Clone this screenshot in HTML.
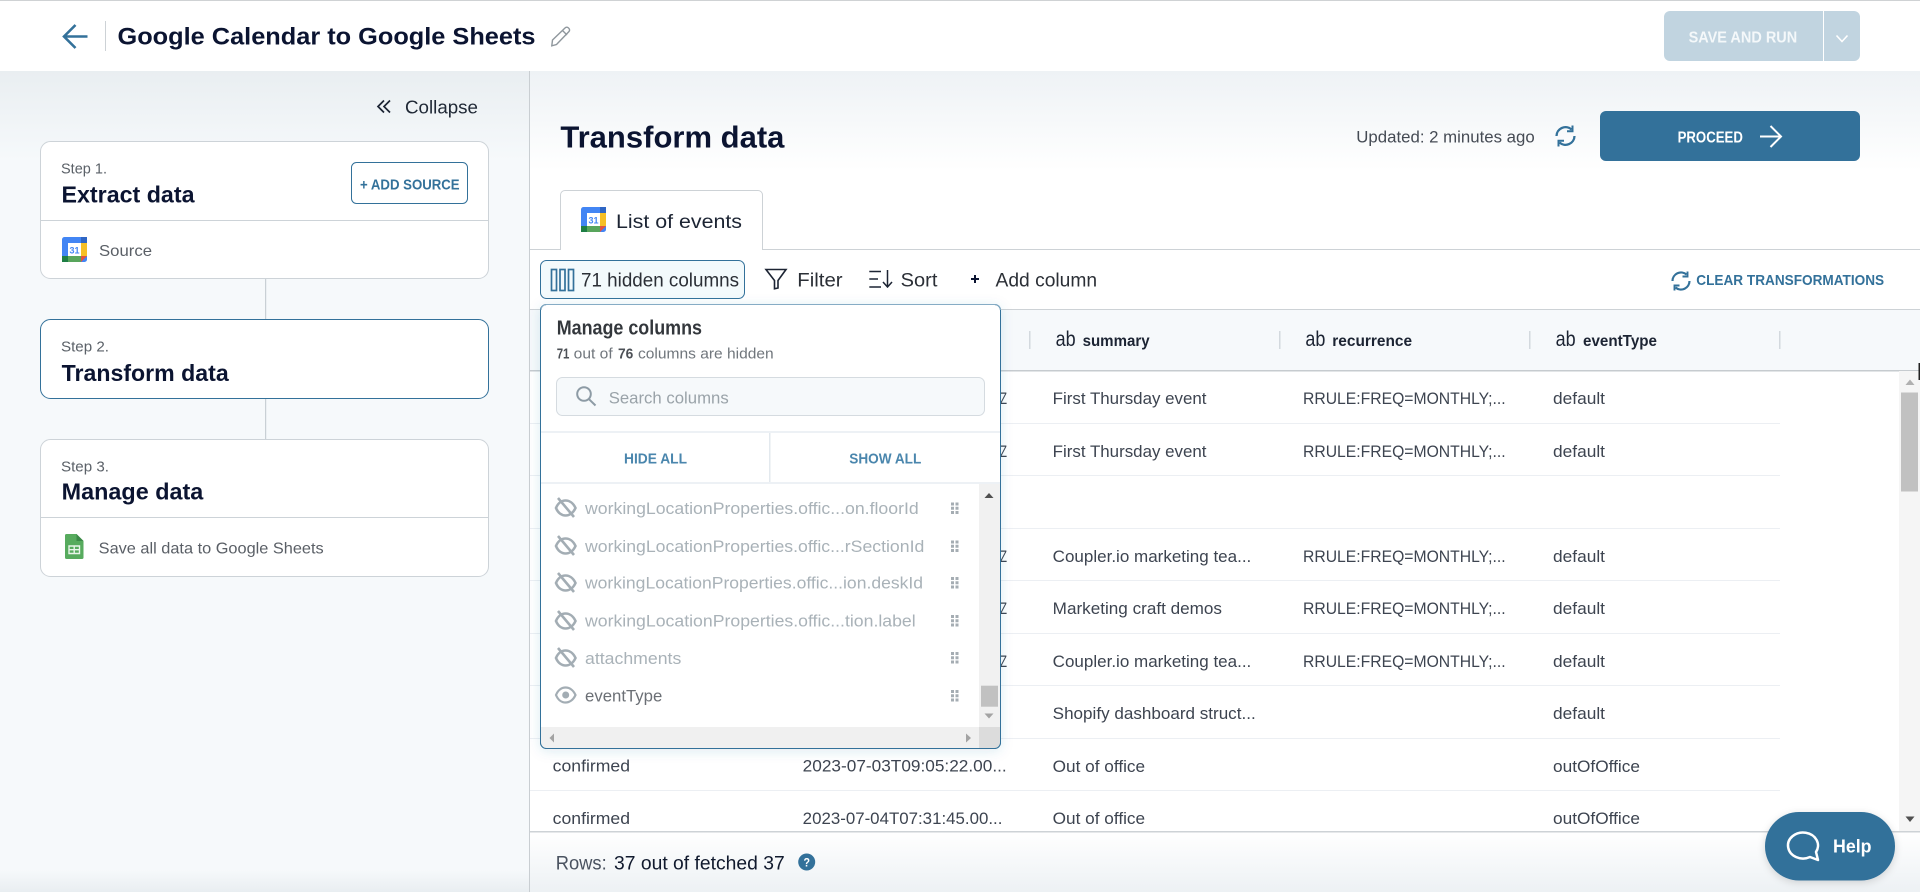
<!DOCTYPE html>
<html lang="en">
<head>
<meta charset="utf-8">
<title>Google Calendar to Google Sheets</title>
<style>
html,body{margin:0;padding:0;background:#fff;width:1920px;height:892px;overflow:hidden}
svg{display:block;font-family:"Liberation Sans",sans-serif}
text{white-space:pre}
.b{font-weight:700}
</style>
</head>
<body>
<svg xmlns="http://www.w3.org/2000/svg" width="1920" height="892" viewBox="0 0 1920 892">
<defs>
<linearGradient id="gs" x1="0" y1="0" x2="0" y2="1"><stop offset="0" stop-color="#e9eef1"/><stop offset="1" stop-color="#f6f9fb"/></linearGradient>
<linearGradient id="gm" x1="0" y1="0" x2="0" y2="1"><stop offset="0" stop-color="#eef2f5"/><stop offset="1" stop-color="#ffffff"/></linearGradient>
<linearGradient id="gb" x1="0" y1="0" x2="0" y2="1"><stop offset="0" stop-color="#f6f9fb"/><stop offset="1" stop-color="#e9eef1"/></linearGradient>
<linearGradient id="gf" x1="0" y1="0" x2="0" y2="1"><stop offset="0" stop-color="#ffffff"/><stop offset="1" stop-color="#edf1f4"/></linearGradient>
<filter id="sh" x="-10%" y="-10%" width="120%" height="120%"><feDropShadow dx="0" dy="2" stdDeviation="6" flood-color="#33719a" flood-opacity=".14"/></filter>
<filter id="sh2" x="-20%" y="-30%" width="140%" height="160%"><feDropShadow dx="0" dy="2" stdDeviation="4" flood-color="#000" flood-opacity=".15"/></filter>
</defs>

<!-- header -->
<rect width="1920" height="71" fill="#fff"/>
<rect width="1920" height="1" fill="#cfd2d4"/>
<path d="M87.5 36.5H65M75.5 25L64 36.5L75.5 48" fill="none" stroke="#33719a" stroke-width="2.6"/>
<rect x="105" y="21" width="1" height="30" fill="#cdd2d6"/>
<text x="117.5" y="44.5" font-size="24.5" class="b" fill="#0b1431" textLength="418" lengthAdjust="spacingAndGlyphs">Google Calendar to Google Sheets</text>
<path d="M552.5 40L565 28C566 27 567.5 27 568.5 28C569.8 29.2 569.8 30.5 569 31.5L556.5 44.5L551.8 45.8ZM562.5 30.5L567 35" fill="none" stroke="#8f979d" stroke-width="1.4"/>
<rect x="1664" y="11" width="196" height="50" rx="6" fill="#c1d4e0"/>
<rect x="1823" y="11" width="1" height="50" fill="#fff"/>
<text x="1688.6" y="42.3" font-size="16" class="b" fill="#f4f8fa" textLength="108.6" lengthAdjust="spacingAndGlyphs">SAVE AND RUN</text>
<path d="M1836.5 35.5L1842 41.5L1847.5 35.5" fill="none" stroke="#fff" stroke-width="1.6"/>

<!-- sidebar -->
<rect x="0" y="71" width="529" height="821" fill="#f6f9fb"/>
<rect x="0" y="71" width="529" height="90" fill="url(#gs)"/>
<rect x="0" y="870" width="529" height="22" fill="url(#gb)"/>
<rect x="529" y="71" width="1" height="821" fill="#c9ced2"/>
<path d="M384 100.5L378 106.5L384 112.5M390 100.5L384 106.5L390 112.5" fill="none" stroke="#1c2433" stroke-width="1.7"/>
<text x="405" y="113.5" font-size="18" fill="#1f2835" textLength="73" lengthAdjust="spacingAndGlyphs">Collapse</text>

<rect x="265" y="279" width="1.2" height="40" fill="#c9d0d5"/>
<rect x="265" y="399" width="1.2" height="40" fill="#c9d0d5"/>

<!-- step 1 -->
<rect x="40.5" y="141.5" width="448" height="137" rx="10" fill="#fff" stroke="#cdd3d8"/>
<rect x="41" y="220" width="447" height="1" fill="#cdd3d8"/>
<text x="61" y="173.5" font-size="15" fill="#5b6168" textLength="46" lengthAdjust="spacingAndGlyphs">Step 1.</text>
<text x="61.5" y="202.7" font-size="23" class="b" fill="#0b1431" textLength="133" lengthAdjust="spacingAndGlyphs">Extract data</text>
<rect x="351.5" y="162.5" width="116" height="41" rx="5" fill="#fff" stroke="#33719a"/>
<text x="360" y="189.3" font-size="15" class="b" fill="#33719a" textLength="99.6" lengthAdjust="spacingAndGlyphs">+ ADD SOURCE</text>
<g>
<rect x="62" y="237" width="25" height="25" rx="2.5" fill="#4285f4"/>
<rect x="81" y="237" width="6" height="6" fill="#2f66c4"/>
<rect x="81" y="243" width="6" height="13" fill="#f6bf26"/>
<rect x="62" y="256" width="19" height="6" fill="#58a55c"/>
<rect x="62" y="256" width="6" height="6" fill="#1e7e45"/>
<path d="M81 256H87L81 262Z" fill="#e2523f"/>
<rect x="68" y="243" width="13" height="13" fill="#fff"/>
<text x="69.5" y="253.5" font-size="9.5" class="b" fill="#4285f4" textLength="10" lengthAdjust="spacingAndGlyphs">31</text>
</g>
<text x="99" y="256" font-size="16" fill="#5a5f66" textLength="53" lengthAdjust="spacingAndGlyphs">Source</text>

<!-- step 2 -->
<rect x="40.5" y="319.5" width="448" height="79" rx="10" fill="#fff" stroke="#33719a"/>
<text x="61" y="351.7" font-size="15" fill="#5b6168" textLength="48" lengthAdjust="spacingAndGlyphs">Step 2.</text>
<text x="61.7" y="381" font-size="23" class="b" fill="#0b1431" textLength="167" lengthAdjust="spacingAndGlyphs">Transform data</text>

<!-- step 3 -->
<rect x="40.5" y="439.5" width="448" height="137" rx="10" fill="#fff" stroke="#cdd3d8"/>
<rect x="41" y="517" width="447" height="1" fill="#cdd3d8"/>
<text x="61" y="471.7" font-size="15" fill="#5b6168" textLength="48" lengthAdjust="spacingAndGlyphs">Step 3.</text>
<text x="61.7" y="499.3" font-size="23" class="b" fill="#0b1431" textLength="141.6" lengthAdjust="spacingAndGlyphs">Manage data</text>
<path d="M66.5 534H76.5L83.5 541V557.5A1.5 1.5 0 0 1 82 559H66.5A1.5 1.5 0 0 1 65 557.5V535.5A1.5 1.5 0 0 1 66.5 534Z" fill="#57ab5e"/>
<path d="M76.5 534L83.5 541H76.5Z" fill="#3c8a48"/>
<path d="M69 546H79.5V553.5H69ZM69 549.7H79.5M74.2 546V553.5" fill="none" stroke="#e9f5ea" stroke-width="1.4"/>
<text x="98.7" y="553.3" font-size="16" fill="#5a5f66" textLength="225" lengthAdjust="spacingAndGlyphs">Save all data to Google Sheets</text>

<!-- main -->
<rect x="530" y="71" width="1390" height="821" fill="#fff"/>
<rect x="530" y="71" width="1390" height="100" fill="url(#gm)"/>
<text x="560.4" y="147.3" font-size="31" class="b" fill="#0b1431" textLength="224" lengthAdjust="spacingAndGlyphs">Transform data</text>
<text x="1356.3" y="142.7" font-size="16.5" fill="#454b54" textLength="178.4" lengthAdjust="spacingAndGlyphs">Updated: 2 minutes ago</text>
<g fill="none" stroke="#33719a" stroke-width="2.3">
<path d="M1556.5 136A9 9 0 0 1 1571.5 129.5"/>
<path d="M1572.5 125.5V131.2H1567" stroke-width="2"/>
<path d="M1574.5 136A9 9 0 0 1 1559.5 142.5"/>
<path d="M1558.5 146.5V140.8H1564" stroke-width="2"/>
</g>
<rect x="1600" y="111" width="260" height="50" rx="6" fill="#33719a"/>
<text x="1677.6" y="142.3" font-size="15.5" class="b" fill="#fff" textLength="65.3" lengthAdjust="spacingAndGlyphs">PROCEED</text>
<path d="M1760 136.5H1780M1770.5 126L1781 136.5L1770.5 147" fill="none" stroke="#fff" stroke-width="2"/>

<!-- tabs -->
<rect x="530" y="249" width="1390" height="1" fill="#cdd2d6"/>
<path d="M560.5 249.5V195A4.5 4.5 0 0 1 565 190.5H758A4.5 4.5 0 0 1 762.5 195V249.5" fill="#fff" stroke="#cdd2d6"/>
<rect x="561" y="248" width="201" height="3" fill="#fff"/>
<g>
<rect x="581" y="207" width="25" height="25" rx="2.5" fill="#4285f4"/>
<rect x="600" y="207" width="6" height="6" fill="#2f66c4"/>
<rect x="600" y="213" width="6" height="13" fill="#f6bf26"/>
<rect x="581" y="226" width="19" height="6" fill="#58a55c"/>
<rect x="581" y="226" width="6" height="6" fill="#1e7e45"/>
<path d="M600 226H606L600 232Z" fill="#e2523f"/>
<rect x="587" y="213" width="13" height="13" fill="#fff"/>
<text x="588.5" y="223.5" font-size="9.5" class="b" fill="#4285f4" textLength="10" lengthAdjust="spacingAndGlyphs">31</text>
</g>
<text x="616" y="228" font-size="19" fill="#1c2433" textLength="126" lengthAdjust="spacingAndGlyphs">List of events</text>

<!-- toolbar -->
<rect x="540.5" y="260.5" width="204" height="38" rx="6" fill="#f3fafc" stroke="#33719a"/>
<g fill="none" stroke="#33719a" stroke-width="1.7">
<rect x="551.5" y="269.5" width="5" height="21"/>
<rect x="560" y="269.5" width="5" height="21"/>
<rect x="568.5" y="269.5" width="5" height="21"/>
</g>
<text x="581" y="286.7" font-size="19" fill="#2b2f36" textLength="158" lengthAdjust="spacingAndGlyphs">71 hidden columns</text>
<path d="M766 269.5H786L778 280.5V288L774.5 288.8V280.5Z" fill="none" stroke="#1c2433" stroke-width="1.6"/>
<text x="797.3" y="286.7" font-size="19" fill="#2b2f36" textLength="45.3" lengthAdjust="spacingAndGlyphs">Filter</text>
<path d="M869.3 271.5H881M869.3 279H878M869.3 287H881M887.5 270V286.5M883 282L887.5 287L892 282" fill="none" stroke="#1c2433" stroke-width="1.5"/>
<text x="900.7" y="286.7" font-size="19" fill="#2b2f36" textLength="36.7" lengthAdjust="spacingAndGlyphs">Sort</text>
<path d="M971 279H979M975 275V283" stroke="#0b1431" stroke-width="2"/>
<text x="995.5" y="286.7" font-size="19" fill="#2b2f36" textLength="101.6" lengthAdjust="spacingAndGlyphs">Add column</text>
<g fill="none" stroke="#33719a" stroke-width="2.2">
<path d="M1672.5 281A8.5 8.5 0 0 1 1686.5 274.5"/>
<path d="M1687.5 271.5V276.5H1682.5" stroke-width="1.9"/>
<path d="M1689.5 281A8.5 8.5 0 0 1 1675.5 287.5"/>
<path d="M1674.5 290.5V285.5H1679.5" stroke-width="1.9"/>
</g>
<text x="1696.3" y="285" font-size="15" class="b" fill="#33719a" textLength="187.8" lengthAdjust="spacingAndGlyphs">CLEAR TRANSFORMATIONS</text>

<!-- table header -->
<rect x="530" y="309" width="1390" height="61" fill="#f6f9fb"/>
<rect x="530" y="309" width="1390" height="1" fill="#cdd2d6"/>
<rect x="530" y="370" width="1390" height="1.5" fill="#c6cbcf"/>
<g fill="#d3d9de">
<rect x="1029" y="331" width="1.5" height="18"/>
<rect x="1279" y="331" width="1.5" height="18"/>
<rect x="1529" y="331" width="1.5" height="18"/>
<rect x="1779" y="331" width="1.5" height="18"/>
</g>
<g font-size="21" fill="#1c2433">
<text x="1055.6" y="346" textLength="20" lengthAdjust="spacingAndGlyphs">ab</text>
<text x="1305.4" y="346" textLength="20" lengthAdjust="spacingAndGlyphs">ab</text>
<text x="1555.6" y="346" textLength="20" lengthAdjust="spacingAndGlyphs">ab</text>
</g>
<g font-size="16" class="b" fill="#1c2433">
<text x="1082.6" y="346" textLength="67" lengthAdjust="spacingAndGlyphs">summary</text>
<text x="1332.3" y="346" textLength="79.8" lengthAdjust="spacingAndGlyphs">recurrence</text>
<text x="1583" y="346" textLength="74" lengthAdjust="spacingAndGlyphs">eventType</text>
</g>

<!-- rows -->
<g fill="#eceff3">
<rect x="530" y="423" width="1250" height="1"/>
<rect x="530" y="475" width="1250" height="1"/>
<rect x="530" y="528" width="1250" height="1"/>
<rect x="530" y="580" width="1250" height="1"/>
<rect x="530" y="633" width="1250" height="1"/>
<rect x="530" y="685" width="1250" height="1"/>
<rect x="530" y="738" width="1250" height="1"/>
<rect x="530" y="790" width="1250" height="1"/>
</g>
<g font-size="16.5" fill="#3d4450">
<text x="1052.7" y="404" textLength="153.8" lengthAdjust="spacingAndGlyphs">First Thursday event</text>
<text x="1303" y="404" textLength="202.6" lengthAdjust="spacingAndGlyphs">RRULE:FREQ=MONTHLY;...</text>
<text x="1553" y="404" textLength="52" lengthAdjust="spacingAndGlyphs">default</text>
<text x="1052.7" y="457" textLength="153.8" lengthAdjust="spacingAndGlyphs">First Thursday event</text>
<text x="1303" y="457" textLength="202.6" lengthAdjust="spacingAndGlyphs">RRULE:FREQ=MONTHLY;...</text>
<text x="1553" y="457" textLength="52" lengthAdjust="spacingAndGlyphs">default</text>
<text x="1052.7" y="562" textLength="198.6" lengthAdjust="spacingAndGlyphs">Coupler.io marketing tea...</text>
<text x="1303" y="562" textLength="202.6" lengthAdjust="spacingAndGlyphs">RRULE:FREQ=MONTHLY;...</text>
<text x="1553" y="562" textLength="52" lengthAdjust="spacingAndGlyphs">default</text>
<text x="1052.7" y="614" textLength="169.3" lengthAdjust="spacingAndGlyphs">Marketing craft demos</text>
<text x="1303" y="614" textLength="202.6" lengthAdjust="spacingAndGlyphs">RRULE:FREQ=MONTHLY;...</text>
<text x="1553" y="614" textLength="52" lengthAdjust="spacingAndGlyphs">default</text>
<text x="1052.7" y="667" textLength="198.6" lengthAdjust="spacingAndGlyphs">Coupler.io marketing tea...</text>
<text x="1303" y="667" textLength="202.6" lengthAdjust="spacingAndGlyphs">RRULE:FREQ=MONTHLY;...</text>
<text x="1553" y="667" textLength="52" lengthAdjust="spacingAndGlyphs">default</text>
<text x="1052.7" y="719" textLength="203" lengthAdjust="spacingAndGlyphs">Shopify dashboard struct...</text>
<text x="1553" y="719" textLength="52" lengthAdjust="spacingAndGlyphs">default</text>
<text x="1052.7" y="772" textLength="92.4" lengthAdjust="spacingAndGlyphs">Out of office</text>
<text x="1553" y="772" textLength="87" lengthAdjust="spacingAndGlyphs">outOfOffice</text>
<text x="1052.7" y="824" textLength="92.4" lengthAdjust="spacingAndGlyphs">Out of office</text>
<text x="1553" y="824" textLength="87" lengthAdjust="spacingAndGlyphs">outOfOffice</text>
<text x="1000" y="404" textLength="7" lengthAdjust="spacingAndGlyphs">Z</text>
<text x="1000" y="457" textLength="7" lengthAdjust="spacingAndGlyphs">Z</text>
<text x="1000" y="562" textLength="7" lengthAdjust="spacingAndGlyphs">Z</text>
<text x="1000" y="614" textLength="7" lengthAdjust="spacingAndGlyphs">Z</text>
<text x="1000" y="667" textLength="7" lengthAdjust="spacingAndGlyphs">Z</text>
<text x="552.7" y="771.7" textLength="77.3" lengthAdjust="spacingAndGlyphs">confirmed</text>
<text x="802.7" y="771.7" textLength="204" lengthAdjust="spacingAndGlyphs">2023-07-03T09:05:22.00...</text>
<text x="552.7" y="824" textLength="77.3" lengthAdjust="spacingAndGlyphs">confirmed</text>
<text x="802.7" y="824" textLength="199.7" lengthAdjust="spacingAndGlyphs">2023-07-04T07:31:45.00...</text>
</g>

<!-- table scrollbar -->
<rect x="1899" y="371" width="21" height="461" fill="#f5f5f5"/>
<rect x="1901" y="392.5" width="17" height="99" fill="#c1c1c1"/>
<path d="M1905.5 385L1910 379.5L1914.5 385Z" fill="#b0b0b0"/>
<path d="M1905.5 816.5L1910 822L1914.5 816.5Z" fill="#505050"/>
<rect x="1918.5" y="363" width="1.5" height="17" fill="#222"/>

<!-- footer -->
<rect x="530" y="832" width="1390" height="60" fill="url(#gf)"/>
<rect x="530" y="831" width="1390" height="1.5" fill="#cdd2d6"/>
<text x="555.7" y="869.3" font-size="19" fill="#4a5260" textLength="51" lengthAdjust="spacingAndGlyphs">Rows:</text>
<text x="614" y="869.3" font-size="19" fill="#111a2e" textLength="170.7" lengthAdjust="spacingAndGlyphs">37 out of fetched 37</text>
<circle cx="806.7" cy="862" r="8.5" fill="#33719a"/>
<text x="803.5" y="866.5" font-size="12" class="b" fill="#fff" textLength="6.5" lengthAdjust="spacingAndGlyphs">?</text>

<!-- help -->
<rect x="1765" y="812" width="130" height="68.5" rx="34" fill="#33719a" filter="url(#sh2)"/>
<path d="M1816 852A15 13 0 1 0 1810 857L1818 860Z" fill="none" stroke="#fff" stroke-width="2.5" stroke-linejoin="round"/>
<text x="1833" y="852.5" font-size="18" class="b" fill="#fff" textLength="38.5" lengthAdjust="spacingAndGlyphs">Help</text>

<!-- popup -->
<rect x="540.5" y="304.5" width="460" height="444" rx="6" fill="#fff" stroke="#33719a" filter="url(#sh)"/>
<text x="556.7" y="334.3" font-size="20" class="b" fill="#33373c" textLength="145.3" lengthAdjust="spacingAndGlyphs">Manage columns</text>
<g font-size="15" fill="#70767c">
<text x="556.7" y="358.7" class="b" fill="#4c5056" textLength="12.7" lengthAdjust="spacingAndGlyphs">71</text>
<text x="573.7" y="358.7" textLength="39" lengthAdjust="spacingAndGlyphs">out of</text>
<text x="618" y="358.7" class="b" fill="#4c5056" textLength="15.3" lengthAdjust="spacingAndGlyphs">76</text>
<text x="638" y="358.7" textLength="135.7" lengthAdjust="spacingAndGlyphs">columns are hidden</text>
</g>
<rect x="556.5" y="377.5" width="428" height="38" rx="6" fill="#f6f9fb" stroke="#d5dbe0"/>
<circle cx="584" cy="394" r="6.8" fill="none" stroke="#8d9ba5" stroke-width="2"/>
<path d="M589 399.2L595.5 405.5" stroke="#8d9ba5" stroke-width="2"/>
<text x="608.7" y="403.3" font-size="17" fill="#9aa3a9" textLength="120" lengthAdjust="spacingAndGlyphs">Search columns</text>
<rect x="541" y="431" width="459" height="2" fill="#edf1f5"/>
<rect x="541" y="482" width="459" height="2" fill="#edf1f5"/>
<rect x="769" y="433" width="1.5" height="49" fill="#e3e9ee"/>
<text x="624" y="463.3" font-size="15" class="b" fill="#4a86ad" textLength="63" lengthAdjust="spacingAndGlyphs">HIDE ALL</text>
<text x="849.3" y="463.3" font-size="15" class="b" fill="#4a86ad" textLength="72" lengthAdjust="spacingAndGlyphs">SHOW ALL</text>

<!-- popup list -->
<g font-size="17" fill="#a9b2b8">
<text x="585" y="514" textLength="333.7" lengthAdjust="spacingAndGlyphs">workingLocationProperties.offic...on.floorId</text>
<text x="585" y="552" textLength="339.3" lengthAdjust="spacingAndGlyphs">workingLocationProperties.offic...rSectionId</text>
<text x="585" y="588.7" textLength="338" lengthAdjust="spacingAndGlyphs">workingLocationProperties.offic...ion.deskId</text>
<text x="585" y="626.7" textLength="330.7" lengthAdjust="spacingAndGlyphs">workingLocationProperties.offic...tion.label</text>
<text x="585" y="664" textLength="96.3" lengthAdjust="spacingAndGlyphs">attachments</text>
<text x="585" y="701.7" fill="#6b6f75" textLength="77.3" lengthAdjust="spacingAndGlyphs">eventType</text>
</g>
<g fill="none" stroke="#a3adb4" stroke-width="2.6">
<path d="M556 508C560 498 571 498 575.5 508C571 518 560 518 556 508ZM558 498L574 517"/>
<path d="M556 546C560 536 571 536 575.5 546C571 556 560 556 556 546ZM558 536L574 555"/>
<path d="M556 583C560 573 571 573 575.5 583C571 593 560 593 556 583ZM558 573L574 592"/>
<path d="M556 621C560 611 571 611 575.5 621C571 631 560 631 556 621ZM558 611L574 630"/>
<path d="M556 658C560 648 571 648 575.5 658C571 668 560 668 556 658ZM558 648L574 667"/>
<path d="M556 695C560 685 571 685 575.5 695C571 705 560 705 556 695Z" stroke-width="2.2"/>
<circle cx="565.7" cy="695" r="3.5" fill="#a3adb4" stroke="none"/>
</g>
<g fill="#a5adb3">
<path d="M951 502.500h3v3H951zM955.500 502.500h3v3H955.500zM951 506.800h3v3H951zM955.500 506.800h3v3H955.500zM951 511h3v3H951zM955.500 511h3v3H955.500z"/>
<path d="M951 540.500h3v3H951zM955.500 540.500h3v3H955.500zM951 544.800h3v3H951zM955.500 544.800h3v3H955.500zM951 549h3v3H951zM955.500 549h3v3H955.500z"/>
<path d="M951 577h3v3H951zM955.500 577h3v3H955.500zM951 581.300h3v3H951zM955.500 581.300h3v3H955.500zM951 585.500h3v3H951zM955.500 585.500h3v3H955.500z"/>
<path d="M951 615h3v3H951zM955.500 615h3v3H955.500zM951 619.300h3v3H951zM955.500 619.300h3v3H955.500zM951 623.500h3v3H951zM955.500 623.500h3v3H955.500z"/>
<path d="M951 652h3v3H951zM955.500 652h3v3H955.500zM951 656.300h3v3H951zM955.500 656.300h3v3H955.500zM951 660.500h3v3H951zM955.500 660.500h3v3H955.500z"/>
<path d="M951 690h3v3H951zM955.500 690h3v3H955.500zM951 694.300h3v3H951zM955.500 694.300h3v3H955.500zM951 698.500h3v3H951zM955.500 698.500h3v3H955.500z"/>
</g>

<!-- popup scrollbars -->
<rect x="979" y="484" width="21" height="243" fill="#f1f1f1"/>
<path d="M984.500 498L989 493L993.500 498Z" fill="#505050"/>
<rect x="981" y="685.700" width="17" height="21" fill="#c1c1c1"/>
<path d="M984.500 713.500L989 718.500L993.500 713.500Z" fill="#a3a3a3"/>
<path d="M541 727H979V748.500H546.500A5.500 5.500 0 0 1 541 743Z" fill="#f0f0f0"/>
<path d="M979 727H1000V743A5.500 5.500 0 0 1 994.500 748.500H979Z" fill="#dcdcdc"/>
<path d="M554 733.500L549.500 738L554 742.500Z" fill="#a3a3a3"/>
<path d="M966 733.500L971 738L966 742.500Z" fill="#a3a3a3"/>
<rect x="540.500" y="304.500" width="460" height="444" rx="6" fill="none" stroke="#33719a"/>
<path d="M541 310A5.500 5.500 0 0 1 546.500 304.500H995A5.500 5.500 0 0 1 1000.500 310" fill="none" stroke="#86acc5"/>
</svg>
</body>
</html>
